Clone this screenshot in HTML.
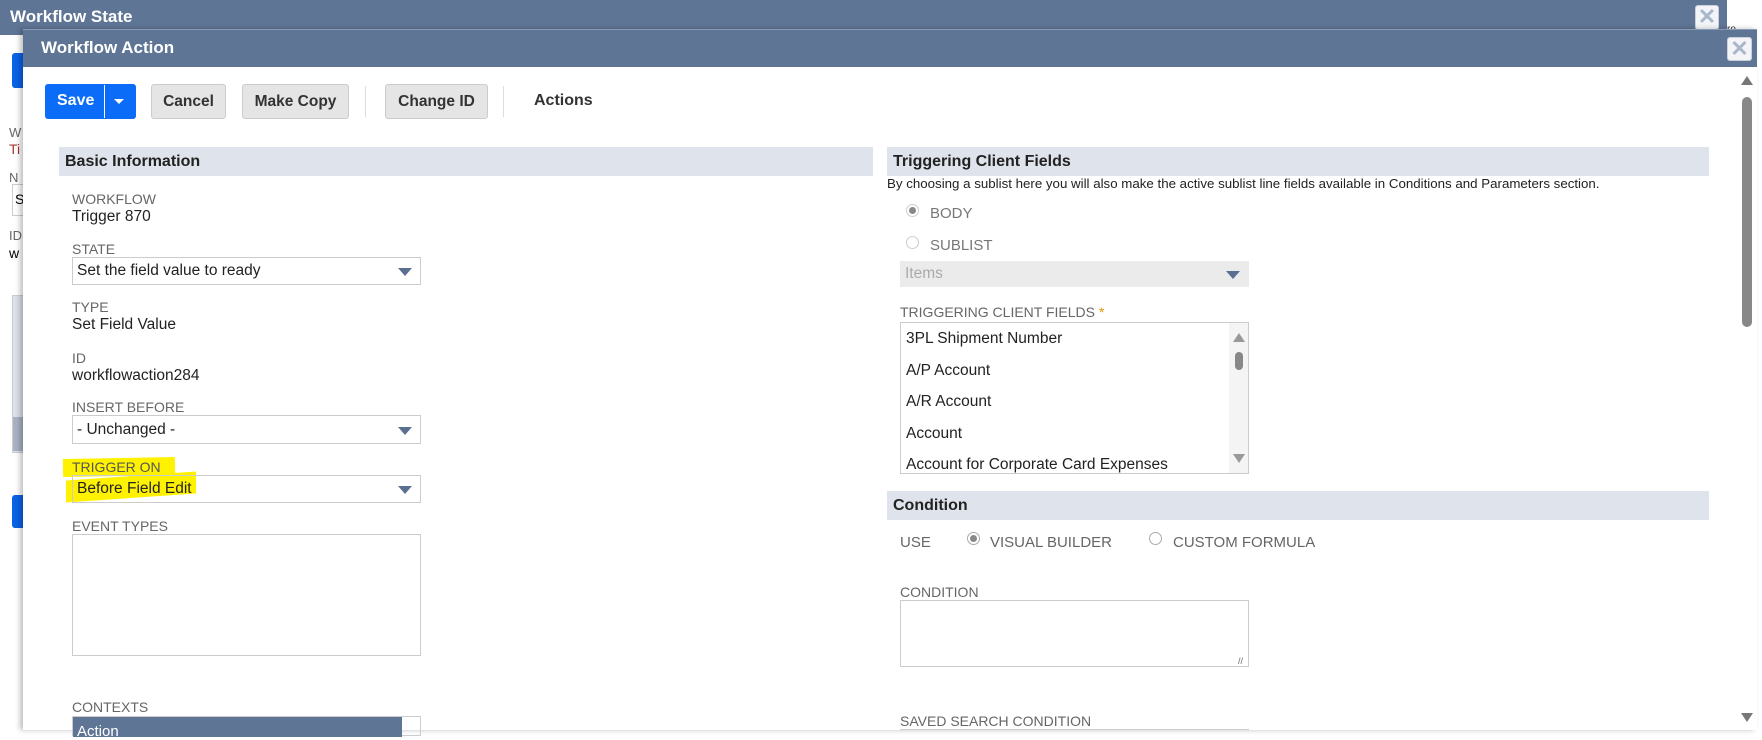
<!DOCTYPE html>
<html><head><meta charset="utf-8"><style>
*{box-sizing:border-box;margin:0;padding:0}
body{width:1762px;height:730px;overflow:hidden;background:#fff;font-family:"Liberation Sans",Arial,sans-serif;position:relative}
.a{position:absolute}
.lbl{position:absolute;font-size:14px;color:#666;text-transform:uppercase;line-height:15px}
.val{position:absolute;font-size:15.5px;color:#222;line-height:16px}
.sel{position:absolute;border:1px solid #ccc;background:#fff;font-size:15.5px;color:#222;padding-left:4px;display:flex;align-items:center}
.tri{position:absolute;right:8px;top:50%;margin-top:-3px;width:0;height:0;border-left:7px solid transparent;border-right:7px solid transparent;border-top:8px solid #5a6f91}
.hdr{position:absolute;background:#dfe3eb;font-weight:bold;font-size:16px;color:#222;padding-left:6px;display:flex;align-items:center}
.btn{position:absolute;background:#e5e5e5;border:1px solid #ccc;border-radius:3px;font-weight:bold;font-size:15.5px;color:#333;display:flex;align-items:center;justify-content:center}
.x{position:absolute;background:#f2f4f7;border:1px solid #c9d0dc;border-radius:3px;color:#a9b7cc;font-size:22px;font-weight:bold;text-align:center;line-height:22px}
.radio{position:absolute;width:13px;height:13px;border-radius:50%;border:1px solid #aaa;background:#fff}
.radio.on::after{content:"";position:absolute;left:2px;top:2px;width:7px;height:7px;border-radius:50%;background:#888}
</style></head><body>
<div class="a" style="left:0;top:0;width:1727px;height:35px;background:#5f7595"></div>
<div class="a" style="left:10px;top:7px;color:#fff;font-weight:bold;font-size:17px">Workflow State</div>
<div class="x" style="left:1695px;top:5px;width:24px;height:25px">✕</div>
<div class="a" style="left:1727px;top:24px;font-size:10px;color:#333">ro</div>
<div class="a" style="left:12px;top:53px;width:14px;height:35px;background:#0a62e6;border-radius:3px"></div>
<div class="a" style="left:9px;top:125px;font-size:13px;color:#666">W</div>
<div class="a" style="left:9px;top:141px;font-size:14px;color:#a33">Ti</div>
<div class="a" style="left:9px;top:170px;font-size:13px;color:#666">N</div>
<div class="a" style="left:12px;top:184px;width:14px;height:32px;border:1px solid #ccc;font-size:14px;padding:6px 2px">S</div>
<div class="a" style="left:9px;top:228px;font-size:13px;color:#666">ID</div>
<div class="a" style="left:9px;top:245px;font-size:14px">w</div>
<div class="a" style="left:12px;top:295px;width:14px;height:158px;background:#dde1e8;border:1px solid #ccc"></div>
<div class="a" style="left:13px;top:417px;width:12px;height:34px;background:#a9b3c4"></div>
<div class="a" style="left:12px;top:495px;width:14px;height:33px;background:#0a62e6;border-radius:3px"></div>
<div class="a" style="left:23px;top:29px;width:1734px;height:701px;background:#fff;box-shadow:-3px 0 5px rgba(0,0,0,.25)"></div>
<div class="a" style="left:23px;top:29px;width:1734px;height:38px;background:#5f7595;border-top:1px solid #8a9bb5"></div>
<div class="a" style="left:41px;top:38px;color:#fff;font-weight:bold;font-size:17px">Workflow Action</div>
<div class="x" style="left:1727px;top:37px;width:25px;height:24px">✕</div>
<div class="a" style="left:1741px;top:76px;width:0;height:0;border-left:6px solid transparent;border-right:6px solid transparent;border-bottom:9px solid #777"></div>
<div class="a" style="left:1742px;top:97px;width:10px;height:230px;background:#888;border-radius:5px"></div>
<div class="a" style="left:1741px;top:713px;width:0;height:0;border-left:6px solid transparent;border-right:6px solid transparent;border-top:9px solid #777"></div>
<div class="a" style="left:45px;top:84px;width:91px;height:35px;background:#0a6cf7;border-radius:3px"></div>
<div class="a" style="left:57px;top:92px;color:#fff;font-weight:bold;font-size:16px">Save</div>
<div class="a" style="left:104px;top:85px;width:1px;height:33px;background:#fff"></div>
<div class="a" style="left:114px;top:99px;width:0;height:0;border-left:5px solid transparent;border-right:5px solid transparent;border-top:5px solid #fff"></div>
<div class="btn" style="left:151px;top:84px;width:75px;height:35px">Cancel</div>
<div class="btn" style="left:242px;top:84px;width:107px;height:35px">Make Copy</div>
<div class="a" style="left:365px;top:86px;width:1px;height:31px;background:#ddd"></div>
<div class="btn" style="left:385px;top:84px;width:103px;height:35px">Change ID</div>
<div class="a" style="left:503px;top:86px;width:1px;height:31px;background:#ddd"></div>
<div class="a" style="left:534px;top:92px;font-weight:bold;font-size:16px;color:#333">Actions</div>
<div class="hdr" style="left:59px;top:147px;width:814px;height:29px">Basic Information</div>
<div class="lbl" style="left:72px;top:192px">Workflow</div>
<div class="val" style="left:72px;top:209px">Trigger 870</div>
<div class="lbl" style="left:72px;top:242px">State</div>
<div class="sel" style="left:72px;top:257px;width:349px;height:28px">Set the field value to ready<div class="tri"></div></div>
<div class="lbl" style="left:72px;top:300px">Type</div>
<div class="val" style="left:72px;top:317px">Set Field Value</div>
<div class="lbl" style="left:72px;top:351px">ID</div>
<div class="val" style="left:72px;top:368px">workflowaction284</div>
<div class="lbl" style="left:72px;top:400px">Insert Before</div>
<div class="sel" style="left:72px;top:415px;width:349px;height:29px">- Unchanged -<div class="tri"></div></div>
<div class="a" style="left:63px;top:458px;width:112px;height:18px;background:#fff200;transform:rotate(-1deg)"></div>
<div class="a" style="left:66px;top:476px;width:130px;height:22px;background:#fff200;transform:skewY(-4deg)"></div>
<div class="lbl" style="left:72px;top:460px;color:#555">Trigger On</div>
<div class="sel" style="left:72px;top:475px;width:349px;height:28px;background:transparent">Before Field Edit<div class="tri"></div></div>
<div class="lbl" style="left:72px;top:519px">Event Types</div>
<div class="a" style="left:72px;top:534px;width:349px;height:122px;border:1px solid #ccc"></div>
<div class="lbl" style="left:72px;top:700px">Contexts</div>
<div class="a" style="left:72px;top:716px;width:349px;height:20px;border:1px solid #ccc"></div>
<div class="a" style="left:73px;top:717px;width:329px;height:20px;background:#5f7595;color:#fff;font-size:15px;padding:6px 4px">Action</div>
<div class="hdr" style="left:887px;top:147px;width:822px;height:29px">Triggering Client Fields</div>
<div class="a" style="left:887px;top:176px;font-size:13.3px;color:#222">By choosing a sublist here you will also make the active sublist line fields available in Conditions and Parameters section.</div>
<div class="radio on" style="left:906px;top:204px;border-color:#ccc"></div>
<div class="lbl" style="left:930px;top:206px;color:#777;font-size:15px">Body</div>
<div class="radio" style="left:906px;top:236px;border-color:#ccc"></div>
<div class="lbl" style="left:930px;top:238px;color:#777;font-size:15px">Sublist</div>
<div class="sel" style="left:900px;top:261px;width:349px;height:26px;background:#ebebeb;border-color:#ebebeb;color:#aaa">Items<div class="tri"></div></div>
<div class="lbl" style="left:900px;top:305px">Triggering Client Fields <span style="color:#e69500">*</span></div>
<div class="a" style="left:900px;top:322px;width:349px;height:152px;border:1px solid #ccc;overflow:hidden">
 <div class="val" style="left:5px;top:8px">3PL Shipment Number</div>
 <div class="val" style="left:5px;top:40px">A/P Account</div>
 <div class="val" style="left:5px;top:71px">A/R Account</div>
 <div class="val" style="left:5px;top:103px">Account</div>
 <div class="val" style="left:5px;top:134px">Account for Corporate Card Expenses</div>
 <div class="a" style="left:328px;top:0;width:20px;height:151px;background:#f4f4f4"></div>
 <div class="a" style="left:332px;top:10px;border-left:6px solid transparent;border-right:6px solid transparent;border-bottom:9px solid #999"></div>
 <div class="a" style="left:334px;top:29px;width:8px;height:18px;background:#888;border-radius:4px"></div>
 <div class="a" style="left:332px;top:131px;border-left:6px solid transparent;border-right:6px solid transparent;border-top:9px solid #999"></div>
</div>
<div class="hdr" style="left:887px;top:491px;width:822px;height:29px">Condition</div>
<div class="lbl" style="left:900px;top:535px;font-size:15px">Use</div>
<div class="radio on" style="left:967px;top:532px"></div>
<div class="lbl" style="left:990px;top:535px;font-size:15px">Visual Builder</div>
<div class="radio" style="left:1149px;top:532px"></div>
<div class="lbl" style="left:1173px;top:535px;font-size:15px">Custom Formula</div>
<div class="lbl" style="left:900px;top:585px">Condition</div>
<div class="a" style="left:900px;top:600px;width:349px;height:67px;border:1px solid #ccc"></div>
<div class="a" style="left:1238px;top:656px;font-size:9px;color:#666">//</div>
<div class="lbl" style="left:900px;top:714px">Saved Search Condition</div>
<div class="a" style="left:900px;top:729px;width:349px;height:1px;background:#ccc"></div>
</body></html>
